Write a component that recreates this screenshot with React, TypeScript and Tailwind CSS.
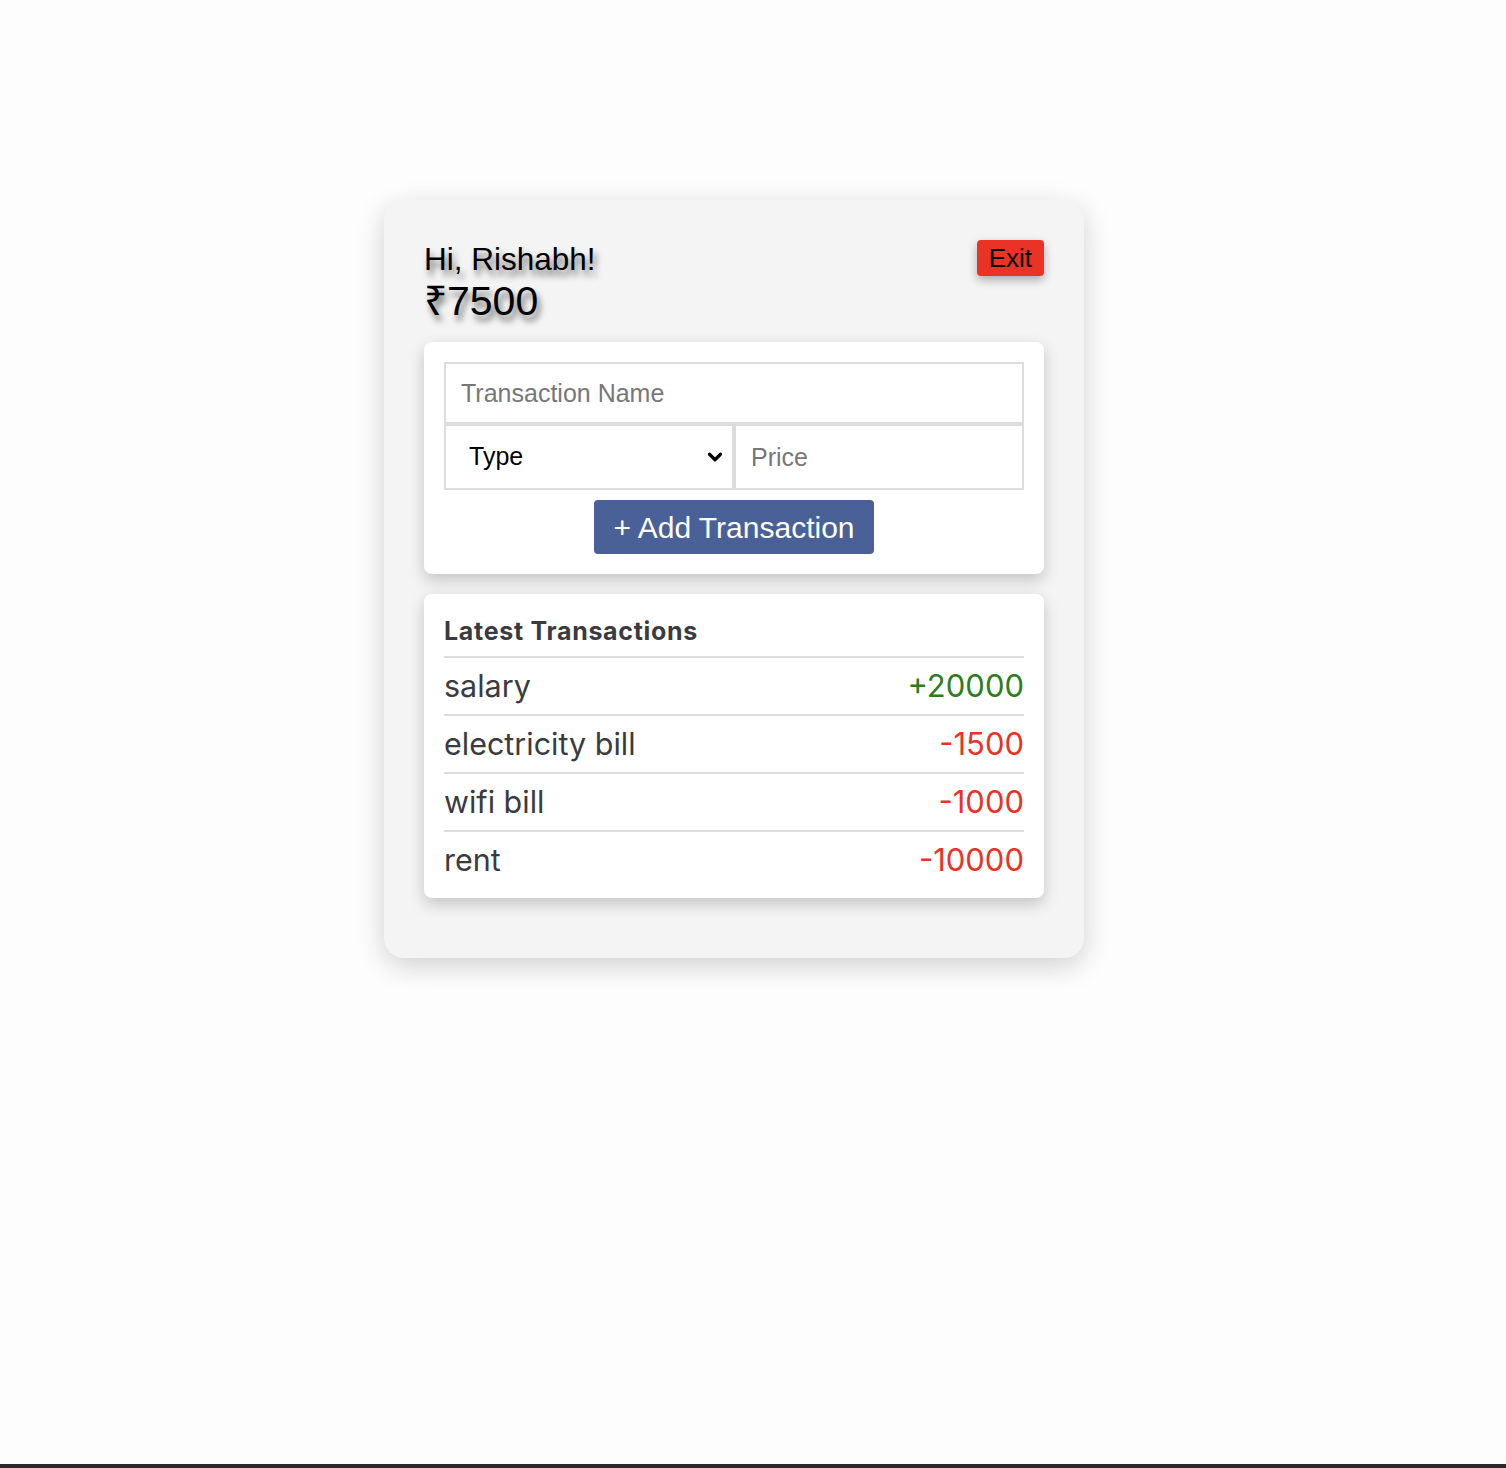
import { ChevronDown } from "lucide-react";

const transactions = [
  { name: "salary", amount: "+20000", income: true },
  { name: "electricity bill", amount: "-1500", income: false },
  { name: "wifi bill", amount: "-1000", income: false },
  { name: "rent", amount: "-10000", income: false },
];

export default function App() {
  return (
    <div className="min-h-[1468px] bg-[#fdfdfd] flex flex-col font-['Liberation_Sans',Arial,sans-serif]">
      <div className="flex-1 pt-[200px] pl-[384px]">
        {/* Wallet card */}
        <div className="w-[700px] bg-[#f4f4f4] rounded-[20px] shadow-[0_8px_28px_rgba(0,0,0,0.18)] px-[40px] pt-[40px] pb-[60px]">
          <div className="flex justify-between items-start mb-[18px]">
            <div className="[text-shadow:3px_6px_6px_rgba(0,0,0,0.55)] text-black">
              <div className="text-[31.5px] leading-[38px]">Hi, Rishabh!</div>
              <div className="text-[41px] leading-[46px]">₹7500</div>
            </div>
            <button className="h-[36px] px-[12px] bg-[#ea3227] text-black text-[26px] leading-[36px] rounded-[4px] shadow-[0_4px_10px_rgba(0,0,0,0.3)]">
              Exit
            </button>
          </div>

          {/* Add form */}
          <div className="bg-white rounded-[8px] shadow-[0_6px_16px_rgba(0,0,0,0.2)] p-[20px] flex flex-col">
            <input
              placeholder="Transaction Name"
              className="h-[62px] border-2 border-[#dcdcdc] px-[15px] text-[25px] text-black placeholder:text-[#777] outline-none"
            />
            <div className="flex">
              <div className="w-[290px] h-[66px] border-2 border-[#dcdcdc] flex items-center justify-between pl-[23px] pr-[6px] text-[25px] text-black">
                <span>Type</span>
                <ChevronDown size={22} strokeWidth={3.5} />
              </div>
              <input
                placeholder="Price"
                className="w-[290px] h-[66px] border-2 border-[#dcdcdc] px-[15px] text-[25px] text-black placeholder:text-[#777] outline-none"
              />
            </div>
            <button className="self-center mt-[10px] w-[280px] h-[54px] bg-[#4a6197] text-white text-[30px] rounded-[4px]">
              + Add Transaction
            </button>
          </div>

          {/* Latest transactions */}
          <div className="mt-[20px] bg-white rounded-[8px] shadow-[0_6px_16px_rgba(0,0,0,0.2)] px-[20px] pt-[22px] pb-[10px] font-['Inter',sans-serif]">
            <div className="text-[25px] font-bold tracking-[0.7px] text-[#3a3b3e] leading-[30px] pb-[10px]">Latest Transactions</div>
            {transactions.map((t) => (
              <div
                key={t.name}
                className="h-[58px] border-t-2 border-[#dcdcdc] flex items-center justify-between text-[31px]"
              >
                <span className="text-[#3a3b3e] text-[30.5px]">{t.name}</span>
                <span className={t.income ? "text-[#2e7d1c]" : "text-[#ea3227]"}>{t.amount}</span>
              </div>
            ))}
          </div>
        </div>
      </div>
      <div className="h-[4px] bg-[#2a2a2c]" />
    </div>
  );
}
